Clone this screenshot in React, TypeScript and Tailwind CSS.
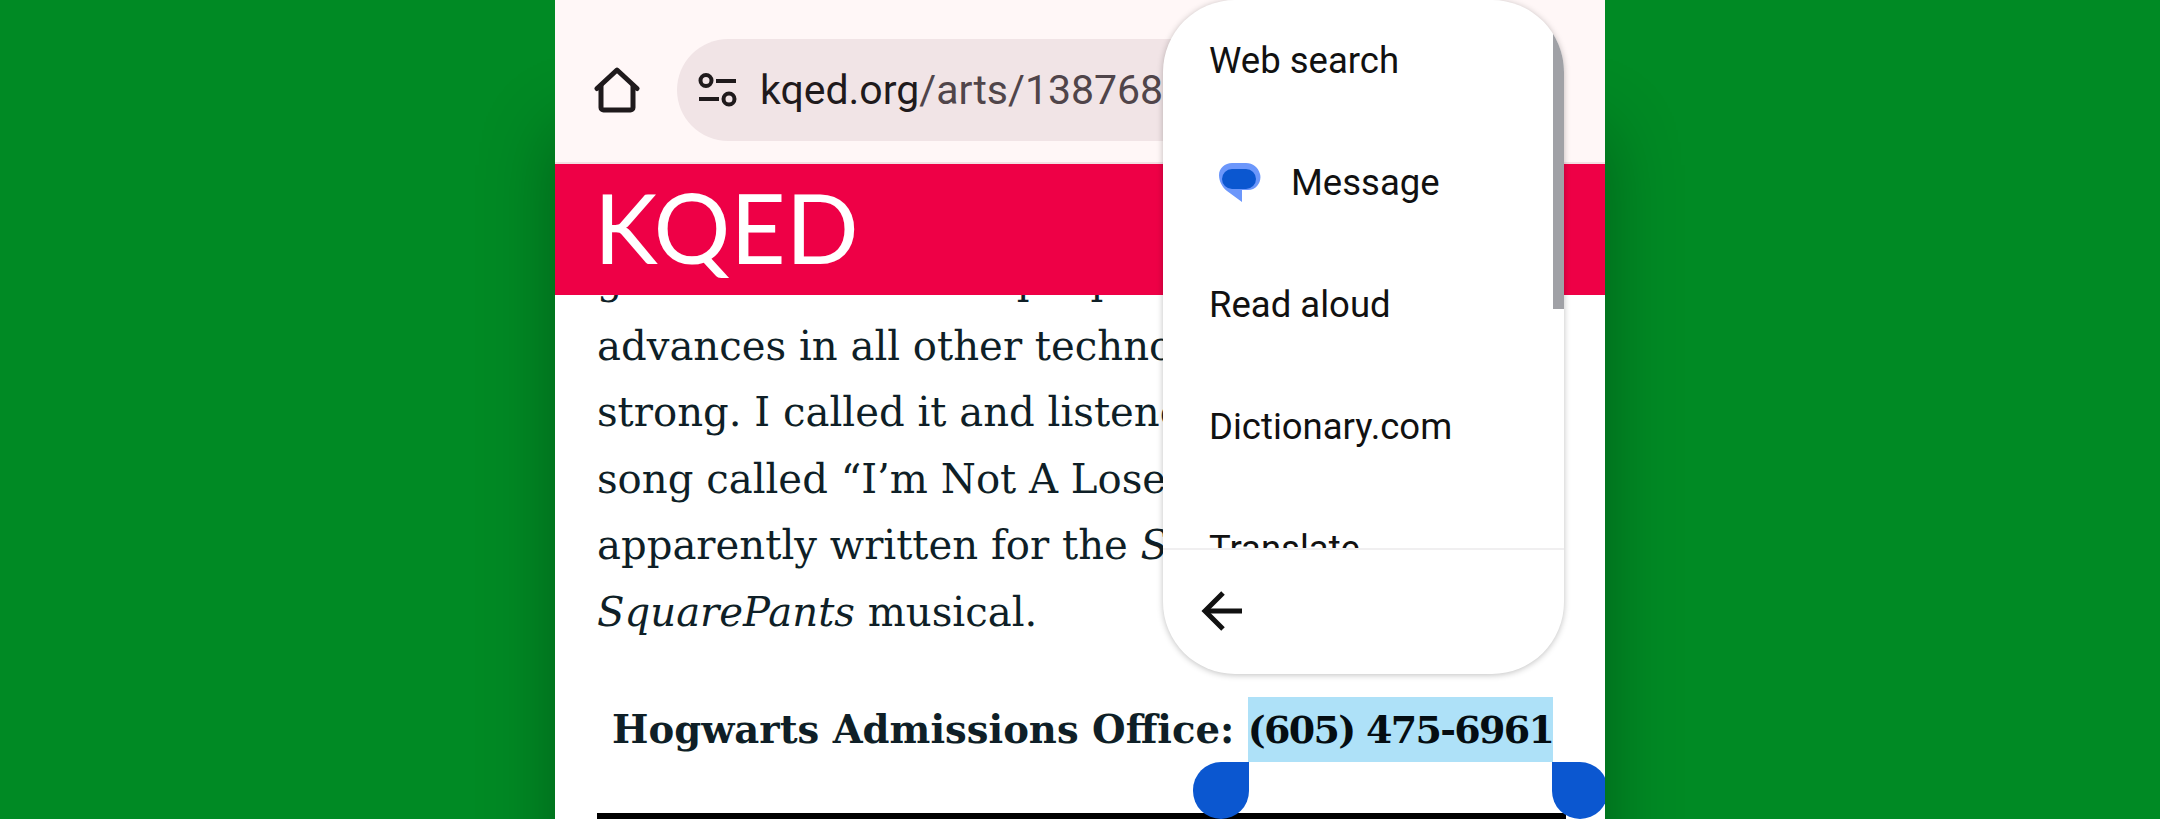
const serif = "font-['DejaVu_Serif',serif]";

function HomeIcon() {
  return (
    <svg width="46" height="46" viewBox="0 0 46 46" fill="none" stroke="#1f1a1c" strokeWidth="5" strokeLinejoin="round" strokeLinecap="round">
      <path d="M3 21.5 23 3l20 18.5" />
      <path d="M7 19v21.5a2.5 2.5 0 0 0 2.5 2.5h27a2.5 2.5 0 0 0 2.5-2.5V19" />
    </svg>
  );
}

function TuneIcon() {
  return (
    <svg width="40" height="34" viewBox="0 0 40 34" fill="none" stroke="#1f1a1c" strokeWidth="4">
      <circle cx="8" cy="7.5" r="5.5" />
      <path d="M18 8h20" />
      <path d="M1 26h20" />
      <circle cx="31" cy="26" r="5.5" />
    </svg>
  );
}

function MessagesIcon() {
  return (
    <svg width="42" height="40" viewBox="0 0 42 40">
      <path d="M13 0h14c7 0 12 4 14 11 2 7-3 16-12 16H23v12L8 28C3 24 0 18 0 12 0 5 6 0 13 0Z" fill="#6c97fb" />
      <rect x="3" y="6" width="34" height="20" rx="10" fill="#0b57d0" />
    </svg>
  );
}

function BackIcon() {
  return (
    <svg width="42" height="40" viewBox="0 0 42 40" fill="none" stroke="#111" strokeWidth="5">
      <path d="M41 20H5" />
      <path d="M22 2 4 20l18 18" />
    </svg>
  );
}

function MenuItem({ label, icon }: { label: string; icon?: boolean }) {
  return (
    <div className="flex h-[122px] shrink-0 items-center pl-[46px]">
      {icon && (
        <div className="ml-[10px] mr-[30px]">
          <MessagesIcon />
        </div>
      )}
      <span className="font-['Roboto',sans-serif] text-[36.5px] leading-none text-[#111]">{label}</span>
    </div>
  );
}

export default function App() {
  return (
    <div className="flex h-[819px] w-full justify-center overflow-hidden bg-[#008a24]">
      <div className="relative flex h-[819px] w-[1050px] shrink-0 flex-col overflow-hidden bg-white shadow-[0_130px_70px_rgba(0,0,0,0.3)]">
        {/* browser toolbar */}
        <div className="flex h-[164px] shrink-0 items-center border-b-2 border-[#f3dfe3] bg-[#fff7f7] pl-[39px] pt-[18px]">
          <HomeIcon />
          <div className="ml-[37px] flex h-[102px] w-[840px] items-center rounded-full bg-[#f1e4e6] pl-[21px]">
            <TuneIcon />
            <span className="ml-[22px] whitespace-nowrap font-['Roboto',sans-serif] text-[41px] leading-none text-[#50454a]">
              <span className="text-[#1f1a1c]">kqed.org</span>/arts/138768
            </span>
          </div>
        </div>

        {/* site header */}
        <div className="flex h-[131px] shrink-0 items-center bg-[#ee0046] pb-[6px] pl-[39px]">
          <span className="font-['Lato',sans-serif] text-[96px] leading-none text-white">KQED</span>
        </div>

        {/* article */}
        <div className={`min-h-0 flex-1 overflow-hidden ${serif} text-[40.2px] leading-[66.5px] text-[#0f1f27]`}>
          <div className="-mt-[49px] whitespace-nowrap pl-[42px]">
            <p>grown so much that people</p>
            <p>advances in all other technologies</p>
            <p>strong. I called it and listened to a</p>
            <p>song called “I’m Not A Loser,”</p>
            <p>
              apparently written for the <em>SpongeBob</em>
            </p>
            <p>
              <em>SquarePants</em> musical.
            </p>
            <p className="mt-[52px] pl-[15px] text-[38.6px] font-bold">
              Hogwarts Admissions Office:{" "}
              <span className="inline-block h-[65px] bg-[#aee1f8] text-[38px] tracking-[-1.7px] text-[#050d12]">(605) 475-6961</span>
            </p>
            <div className="mt-[49px] h-[6px] w-[969px] bg-black" />
          </div>
        </div>

        {/* selection handles */}
        <div className="absolute left-[638px] top-[762px] h-[57px] w-[56px] rounded-full rounded-tr-none bg-[#0b57d0]" />
        <div className="absolute left-[997px] top-[762px] h-[57px] w-[56px] rounded-full rounded-tl-none bg-[#0b57d0]" />

        {/* text selection overflow menu */}
        <div className="absolute left-[608px] top-0 flex h-[674px] w-[401px] flex-col overflow-hidden rounded-[72px] bg-white shadow-[0_1px_6px_rgba(0,0,0,0.25)]">
          <div className="relative h-[548px] shrink-0 overflow-hidden">
            <div className="flex flex-col">
              <MenuItem label="Web search" />
              <MenuItem label="Message" icon />
              <MenuItem label="Read aloud" />
              <MenuItem label="Dictionary.com" />
              <MenuItem label="Translate" />
            </div>
            <div className="absolute right-0 top-0 h-[309px] w-[11px] bg-[#a0a1a6]" />
          </div>
          <div className="flex flex-1 items-center border-t-2 border-[#f0eff0] pb-[3px] pl-[38px]">
            <BackIcon />
          </div>
        </div>
      </div>
    </div>
  );
}
